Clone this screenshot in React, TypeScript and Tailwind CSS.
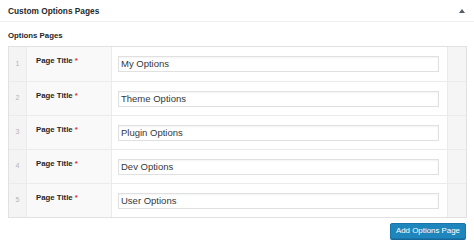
import React from "react";

const rows = ["My Options", "Theme Options", "Plugin Options", "Dev Options", "User Options"];

export default function App() {
  return (
    <div
      className="w-[474px] h-[247px] bg-white text-[#23282d] overflow-hidden"
      style={{ fontFamily: '"Liberation Sans", Arial, sans-serif' }}
    >
      {/* ── Postbox header ── */}
      <div className="h-[22px] flex items-center justify-between pl-2 pr-[9px] border-b border-[#eeeeee]">
        <span className="text-[8.3px] font-bold leading-none pt-[1px]">Custom Options Pages</span>
        <svg width="6" height="4" viewBox="0 0 6 4" className="mt-[1px]">
          <path d="M3 0 L6 4 L0 4 Z" fill="#555d66" />
        </svg>
      </div>

      <div className="px-2">
        <div className="text-[7.8px] font-bold leading-none pt-[10px] pb-[6px]">Options Pages</div>

        {/* ── Repeater table ── */}
        <div className="w-[459px] border border-[#e1e1e1]">
          {rows.map((value, i) => (
            <div
              key={value}
              className={`grid grid-cols-[18px_85px_1fr_19px] h-[34px] ${i > 0 ? "border-t border-[#ebebeb]" : ""}`}
            >
              <div className="bg-[#f4f4f4] border-r border-[#ebebeb] flex items-center justify-center text-[7px] text-[#b4b4b4]">
                {i + 1}
              </div>
              <div className="bg-[#f9f9f9] border-r border-[#ebebeb] pl-[9px] pt-[10px] text-[7.8px] font-bold leading-none">
                Page Title <span className="text-[#dc3232]">*</span>
              </div>
              <div className="pl-[6px] pr-[8px] pt-[9px]">
                <div className="h-[16px] border border-[#e0e0e0] shadow-[inset_0_1px_2px_rgba(0,0,0,0.05)] flex items-center pl-[2px] text-[9.5px] text-[#32373c]">
                  {value}
                </div>
              </div>
              <div className="bg-[#f5f5f5] border-l border-[#ebebeb]" />
            </div>
          ))}
        </div>

        {/* ── Add row ── */}
        <div className="w-[459px] flex justify-end pt-[5px]">
          <button className="h-[16px] px-[5px] rounded-[2px] bg-[#1f86bd] border border-[#1a76a8] shadow-[0_1px_0_#16699a] text-white text-[7.9px] leading-none mr-[1px]">
            Add Options Page
          </button>
        </div>
      </div>
    </div>
  );
}
